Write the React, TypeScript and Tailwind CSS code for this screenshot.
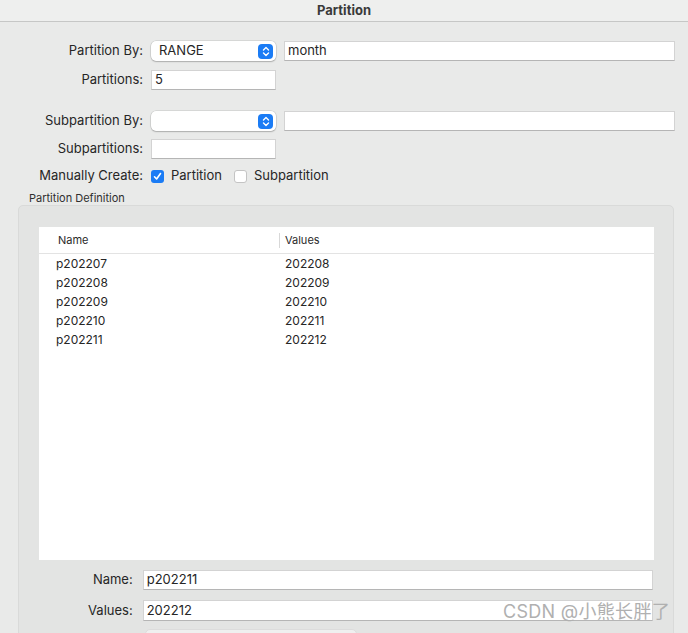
import React from 'react';

const rows = [
  ['p202207', '202208'],
  ['p202208', '202209'],
  ['p202209', '202210'],
  ['p202210', '202211'],
  ['p202211', '202212'],
];

function Field({ value, className }: { value?: string; className: string }) {
  return (
    <div
      className={`h-[20px] bg-white border border-[#d3d3d3] border-b-[#b5b5b5] flex items-center px-[3px] text-[13px] text-[#262626] ${className}`}
    >
      {value}
    </div>
  );
}

function Select({ value }: { value?: string }) {
  return (
    <div className="w-[125px] h-[20px] bg-white rounded-[5px] shadow-[0_0_0_0.5px_rgba(0,0,0,0.15),0_1px_1.5px_rgba(0,0,0,0.2)] flex items-center pl-[8px] pr-[3px] text-[13px] text-[#262626]">
      <span className="flex-1">{value}</span>
      <div className="w-[15px] h-[15px] rounded-[4px] bg-[#1b7cf5] flex items-center justify-center">
        <svg width="8" height="11" viewBox="0 0 8 11" fill="none" stroke="white" strokeWidth="1.4" strokeLinecap="round" strokeLinejoin="round">
          <path d="M1.5 4 L4 1.6 L6.5 4" />
          <path d="M1.5 7 L4 9.4 L6.5 7" />
        </svg>
      </div>
    </div>
  );
}

function Label({ children }: { children: React.ReactNode }) {
  return <div className="w-[143px] text-right text-[13px] text-[#262626] shrink-0">{children}</div>;
}

export default function App() {
  return (
    <div
      className="relative w-[688px] h-[633px] overflow-hidden bg-[#e9eae9]"
      style={{ fontFamily: 'Inter, "Liberation Sans", "Noto Sans CJK SC", sans-serif' }}
    >
      <div className="h-[22px] bg-[#eeefee] border-b border-[#c6c7c6] flex items-center justify-center text-[13px] font-bold text-[#3a3a3a]">
        Partition
      </div>

      <div className="pt-[19px] flex flex-col">
        <div className="flex items-center gap-[8px] h-[20px]">
          <Label>Partition By:</Label>
          <Select value="RANGE" />
          <Field value="month" className="w-[391px]" />
        </div>
        <div className="flex items-center gap-[8px] h-[20px] mt-[9px]">
          <Label>Partitions:</Label>
          <Field value="5" className="w-[125px]" />
        </div>
        <div className="flex items-center gap-[8px] h-[20px] mt-[21px]">
          <Label>Subpartition By:</Label>
          <Select />
          <Field className="w-[391px]" />
        </div>
        <div className="flex items-center gap-[8px] h-[20px] mt-[8px]">
          <Label>Subpartitions:</Label>
          <Field className="w-[125px]" />
        </div>
        <div className="flex items-center gap-[8px] h-[18px] mt-[8px]">
          <Label>Manually Create:</Label>
          <div className="flex items-center text-[13px] text-[#262626]">
            <div className="w-[13px] h-[13px] rounded-[3px] bg-[#1b7cf5] flex items-center justify-center">
              <svg width="9" height="9" viewBox="0 0 9 9" fill="none" stroke="white" strokeWidth="1.6" strokeLinecap="round" strokeLinejoin="round">
                <path d="M1.5 4.8 L3.6 7 L7.5 1.5" />
              </svg>
            </div>
            <span className="ml-[7px]">Partition</span>
            <div className="ml-[12px] w-[13px] h-[13px] rounded-[3px] bg-white border border-[#c4c4c4]" />
            <span className="ml-[7px]">Subpartition</span>
          </div>
        </div>

        <div className="ml-[29px] mt-[6px] text-[11px] text-[#2f2f2f] leading-[14px]">Partition Definition</div>

        <div className="ml-[18px] w-[656px] h-[440px] rounded-[5px] bg-[#e3e4e3] border border-[#d9dad9] pt-[21px] px-[20px]">
          <div className="w-[615px] h-[333px] bg-white">
            <div className="h-[27px] border-b border-[#e3e3e3] flex items-center text-[11px] text-[#2a2a2a]">
              <div className="w-[240px] pl-[19px]">Name</div>
              <div className="w-px h-[15px] bg-[#d8d8d8]" />
              <div className="pl-[5px]">Values</div>
            </div>
            {rows.map(([n, v]) => (
              <div key={n} className="h-[19px] flex items-center text-[12px] text-[#262626]">
                <div className="w-[244px] pl-[17px]">{n}</div>
                <div className="pl-[2px]">{v}</div>
              </div>
            ))}
          </div>

          <div className="flex items-center mt-[10px] h-[20px]">
            <div className="w-[94px] text-right text-[13px] text-[#262626]">Name:</div>
            <Field value="p202211" className="ml-[10px] w-[512px]" />
          </div>
          <div className="flex items-center mt-[10px] h-[21px]">
            <div className="w-[94px] text-right text-[13px] text-[#262626]">Values:</div>
            <Field value="202212" className="ml-[10px] w-[512px] h-[21px]" />
          </div>
          <div className="ml-[106px] mt-[8px] w-[212px] h-[20px] rounded-[5px] bg-[#efefef] border border-[#dcdcdc]" />
        </div>
      </div>

      <div className="absolute left-[503px] top-[600px] text-[18px] leading-[24px] text-[#b0b0b0] tracking-[0.3px]">
        CSDN @小熊长胖了
      </div>
    </div>
  );
}
